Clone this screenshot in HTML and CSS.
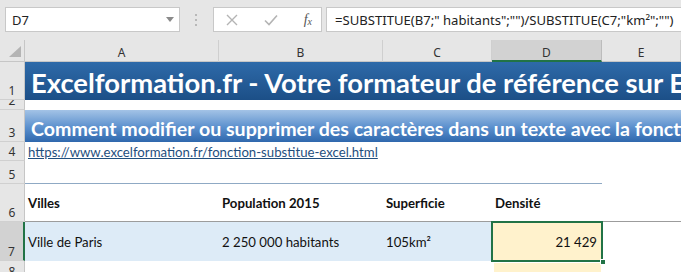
FILE: index.html
```html
<!DOCTYPE html>
<html lang="fr">
<head>
    <meta charset="UTF-8">
    <meta name="viewport" content="width=device-width, initial-scale=1.0">
    <title>SUBSTITUE</title>
    <link rel="stylesheet" href="styles.css">
</head>
<body>
    <div class="toolbar">
        <div class="namebox">
            <span>D7</span>
            <svg class="arrow" width="8" height="5" viewBox="0 0 8 5"><path d="M0 0h8L4 5z" fill="#8a8a8a"/></svg>
        </div>
        <svg class="grip" width="3" height="13" viewBox="0 0 3 13">
            <rect x="0" y="0" width="2" height="2" fill="#b8b8b8"/>
            <rect x="0" y="5" width="2" height="2" fill="#b8b8b8"/>
            <rect x="0" y="10" width="2" height="2" fill="#b8b8b8"/>
        </svg>
        <div class="fxbtns">
            <svg width="12" height="12" viewBox="0 0 12 12"><path d="M1 1l10 10M11 1L1 11" stroke="#b4b4b4" stroke-width="1.4"/></svg>
            <svg width="14" height="12" viewBox="0 0 14 12"><path d="M1 6.5l4 4L13 1.5" stroke="#b4b4b4" stroke-width="1.6" fill="none"/></svg>
            <span class="fx">f<sub>x</sub></span>
        </div>
        <div class="formula">=SUBSTITUE(B7;" habitants";"")/SUBSTITUE(C7;"km²";"")</div>
    </div>

    <div class="sheet">
        <div class="corner"><svg width="12" height="11" viewBox="0 0 12 11"><path d="M12 0v11H0z" fill="#b4b4b4"/></svg></div>
        <div class="ch">A</div>
        <div class="ch">B</div>
        <div class="ch">C</div>
        <div class="ch ch-sel">D</div>
        <div class="ch">E</div>

        <div class="rh">1</div>
        <div class="cell title">Excelformation.fr - Votre formateur de référence sur Excel</div>

        <div class="rh">2</div>
        <div class="cell wide"></div>

        <div class="rh">3</div>
        <div class="cell subtitle">Comment modifier ou supprimer des caractères dans un texte avec la fonction SUBSTITUE</div>

        <div class="rh">4</div>
        <div class="cell wide"><a class="link" href="#">https://www.excelformation.fr/fonction-substitue-excel.html</a></div>

        <div class="rh">5</div>
        <div class="cell line-blue"></div>
        <div class="cell line-blue"></div>
        <div class="cell line-blue"></div>
        <div class="cell line-blue"></div>
        <div class="cell"></div>

        <div class="rh">6</div>
        <div class="cell head">Villes</div>
        <div class="cell head">Population 2015</div>
        <div class="cell head">Superficie</div>
        <div class="cell head">Densité</div>
        <div class="cell head"></div>

        <div class="rh rh-sel">7</div>
        <div class="cell data">Ville de Paris</div>
        <div class="cell data">2 250 000 habitants</div>
        <div class="cell data">105km²</div>
        <div class="cell active">21 429<span class="handle"></span></div>
        <div class="cell"></div>

        <div class="rh">8</div>
        <div class="cell"></div>
        <div class="cell"></div>
        <div class="cell"></div>
        <div class="cell below"></div>
        <div class="cell"></div>
    </div>
</body>
</html>
```

FILE: styles.css
```css
* {
    box-sizing: border-box;
}
body {
    margin: 0;
    width: 681px;
    height: 272px;
    overflow: hidden;
    background-color: #fff;
    font-family: Lato, "Open Sans", sans-serif;
}
.toolbar {
    height: 40px;
    padding: 7px 0 0 5px;
    display: flex;
    align-items: flex-start;
    background-color: #e6e6e6;
}
.namebox {
    width: 175px;
    height: 25px;
    background-color: #fff;
    border: 1px solid #c8c8c8;
    display: flex;
    align-items: center;
    justify-content: space-between;
    padding: 0 5px 0 6px;
    font-family: "Noto Sans", sans-serif;
    font-size: 13px;
    color: #222;
}
.grip {
    margin: 7px 15px 0 15px;
}
.fxbtns {
    width: 109px;
    height: 25px;
    background-color: #fff;
    border: 1px solid #c8c8c8;
    display: flex;
    align-items: center;
    justify-content: space-between;
    padding: 0 9px 0 12px;
}
.fx {
    font-family: "Liberation Serif", serif;
    font-style: italic;
    font-size: 14px;
    color: #555;
}
.fx sub {
    font-size: 10px;
    vertical-align: -1px;
}
.formula {
    flex: 1;
    height: 25px;
    margin-left: 4px;
    background-color: #fff;
    border: 1px solid #c8c8c8;
    border-right: none;
    padding: 3px 0 0 8px;
    font-family: "Noto Sans", sans-serif;
    font-size: 13.1px;
    color: #222;
    white-space: nowrap;
    overflow: hidden;
}
.sheet {
    display: grid;
    grid-template-columns: 25px 194px 164px 109px 110px 1fr;
    grid-template-rows: 22px 38px 10px 32px 19px 23px 38px 39px 20px;
}
.corner {
    background-color: #e6e6e6;
    border-right: 1px solid #c6c6c6;
    border-bottom: 1px solid #c6c6c6;
    display: flex;
    justify-content: flex-end;
    align-items: flex-end;
    padding: 0 3px 4px 0;
}
.ch {
    background-color: #e6e6e6;
    border-right: 1px solid #cfcfcf;
    border-bottom: 1px solid #c6c6c6;
    font-family: "Noto Sans", sans-serif;
    font-size: 12px;
    color: #333;
    text-align: center;
    padding-top: 4px;
}
.ch-sel {
    background-color: #d2d2d2;
    border-bottom: 2px solid #217346;
    border-right-color: #bcbcbc;
}
.rh {
    background-color: #e6e6e6;
    border-right: 1px solid #c6c6c6;
    border-bottom: 1px solid #d0d0d0;
    font-family: "Noto Sans", sans-serif;
    font-size: 12px;
    color: #333;
    display: flex;
    justify-content: center;
    align-items: flex-end;
    line-height: 17px;
    overflow: hidden;
}
.rh-sel {
    background-color: #d2d2d2;
    border-right: 2px solid #217346;
}
.cell {
    display: flex;
    align-items: center;
    padding-left: 3px;
    font-size: 13.2px;
    color: #111;
    white-space: nowrap;
    min-width: 0;
}
.wide {
    grid-column: 2 / 7;
}
.title {
    grid-column: 2 / 7;
    background: linear-gradient(#2e6aa9, #1c4f87);
    color: #fff;
    font-weight: bold;
    font-size: 27.4px;
    line-height: 32px;
    align-items: flex-end;
    padding-left: 6px;
    padding-bottom: 1px;
    overflow: hidden;
}
.subtitle {
    grid-column: 2 / 7;
    background: linear-gradient(#a3c3e6, #5a8fcd 55%, #2f68ad);
    color: #fff;
    font-weight: bold;
    font-size: 19.6px;
    line-height: 22px;
    align-items: flex-end;
    padding-left: 6px;
    padding-bottom: 2px;
    overflow: hidden;
}
.link {
    color: #1f4f7e;
    font-size: 13.2px;
    padding-top: 1px;
}
.line-blue {
    border-bottom: 1px solid #8fa9c4;
}
.head {
    font-weight: bold;
    border-bottom: 1px solid #9c9c9c;
}
.data {
    background-color: #ddebf7;
}
.active {
    position: relative;
    background-color: #fff2cc;
    justify-content: flex-end;
    padding-right: 5px;
    outline: 2px solid #217346;
    outline-offset: -1px;
}
.handle {
    position: absolute;
    right: -4px;
    bottom: -4px;
    width: 6px;
    height: 6px;
    background-color: #217346;
    border: 1px solid #fff;
}
.below {
    background-color: #fff2cc;
    margin: 2px 1px 0 2px;
}
```
